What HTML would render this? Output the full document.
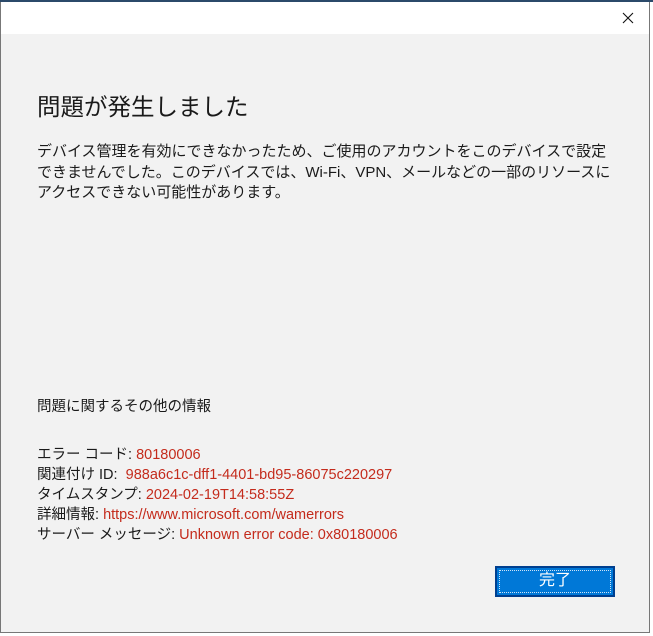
<!DOCTYPE html>
<html><head><meta charset="utf-8"><style>
html,body{margin:0;padding:0;width:653px;height:636px;overflow:hidden;background:#fff;}
body{font-family:"Liberation Sans","Noto Sans CJK JP",sans-serif;color:#1a1a1a;position:relative;}
.win{position:absolute;left:0;top:0;width:650px;height:633px;background:#f2f2f2;border-left:1px solid #777;border-right:1px solid #777;border-bottom:1px solid #777;box-sizing:border-box;}
.topline{position:absolute;left:0;top:0;width:653px;height:2px;background:#2b4a6a;}
.bar{position:absolute;left:1px;top:2px;width:648px;height:32px;background:#fff;}
.x{position:absolute;left:622px;top:12px;}
.t{position:absolute;left:37px;white-space:nowrap;}
.h{font-size:23.5px;top:88px;}
.p{font-size:15px;line-height:20.5px;top:142px;}
.s{font-size:14.5px;}
.r{color:#c42b1c;}
.btn{position:absolute;left:495px;top:566px;width:120px;height:31px;background:#0078d7;border:2px solid #003f8f;box-sizing:border-box;color:#fff;font-size:16px;text-align:center;line-height:26px;}
.btn i{position:absolute;left:2px;top:2px;right:2px;bottom:2px;border:1px dotted #cfe4f7;}
</style></head><body>
<div class="win"></div>
<div class="topline"></div>
<div class="bar"></div>
<svg class="x" width="12" height="12" viewBox="0 0 12 12"><path d="M1 1L11 11M11 1L1 11" stroke="#111" stroke-width="1.1"/></svg>
<div class="t h">問題が発生しました</div>
<div class="t p">デバイス管理を有効にできなかったため、ご使用のアカウントをこのデバイスで設定<br>できませんでした。このデバイスでは、Wi-Fi、VPN、メールなどの一部のリソースに<br>アクセスできない可能性があります。</div>
<div class="t s" style="top:395px">問題に関するその他の情報</div>
<div class="t s" style="top:443px">エラー コード: <span class="r">80180006</span></div>
<div class="t s" style="top:463px">関連付け ID:&nbsp; <span class="r">988a6c1c-dff1-4401-bd95-86075c220297</span></div>
<div class="t s" style="top:483px">タイムスタンプ: <span class="r">2024-02-19T14:58:55Z</span></div>
<div class="t s" style="top:503px">詳細情報: <span class="r">https://www.microsoft.com/wamerrors</span></div>
<div class="t s" style="top:523px">サーバー メッセージ: <span class="r">Unknown error code: 0x80180006</span></div>
<div class="btn"><i></i>完了</div>
</body></html>
